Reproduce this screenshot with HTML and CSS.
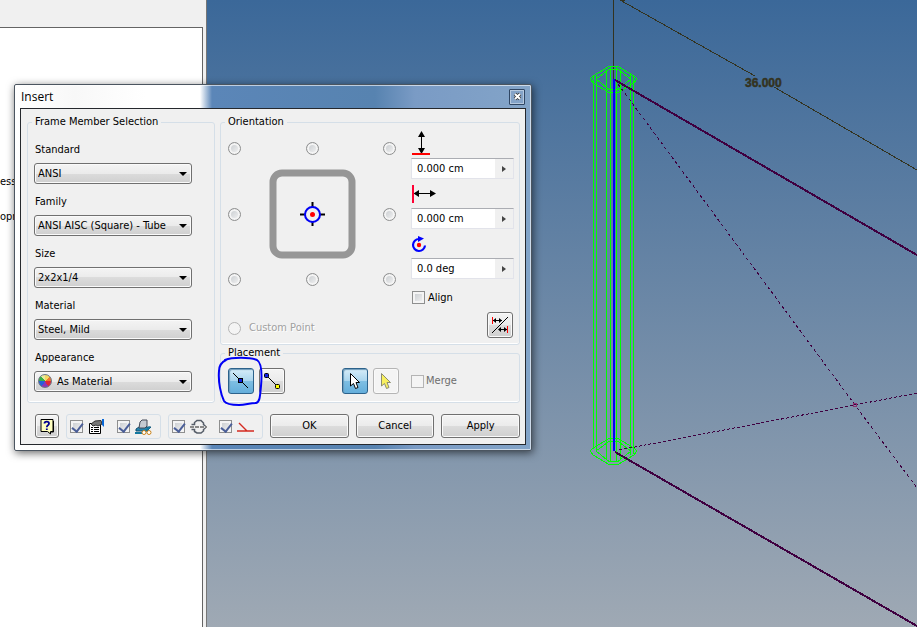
FILE: index.html
```html
<!DOCTYPE html>
<html lang="en">
<head>
    <meta charset="utf-8">
    <title>Insert Frame</title>
    <link rel="stylesheet" href="styles.css">
</head>
<body>
    <div class="app">
        <aside class="browser">
            <div class="browser-tree">
                <p>ess</p>
                <p>opr</p>
            </div>
        </aside>

        <main class="viewport">
            <svg class="model" viewBox="207 0 710 627" preserveAspectRatio="xMinYMin slice" shape-rendering="crispEdges" fill="none">
                <!-- dimension -->
                <g stroke="#33331f">
                    <path d="M613.5 0V79M620 0L755 76M774 87L917 170"/>
                    <path d="M620 0h5" stroke-width="2"/>
                </g>
                <text class="dimension" x="745" y="87">36.000</text>
                <!-- tube -->
                <g stroke="#00ff00">
                    <path d="M593.5 76V449M596.5 75V450M606.5 70V459M610.5 67V461M616.5 67V461M620.5 70V459M630.5 75V455M633.5 76V454"/>
                    <path id="profile" d="M590 79L593 76L609 66.500H618L634 76L637 79L634 83L618 92.500H609L593 83ZM596 79L609 69.500H618L631 79L618 89.500H609Z"/>
                    <use href="#profile" y="372"/>
                </g>
                <path d="M614 79V451" stroke="#0000ff" stroke-width="2"/>
                <!-- sketch lines -->
                <g stroke="#3f0040">
                    <path d="M615 80L917 255M615 452L917 626" stroke-width="2"/>
                    <path d="M618 84L855 405L917 488" stroke-dasharray="3 3"/>
                    <path d="M619 450L855 405L917 393" stroke-dasharray="3 2"/>
                </g>
                <rect x="853.500" y="403.500" width="3" height="3" stroke="#8c3070"/>
            </svg>
        </main>
    </div>

    <form class="dialog" onsubmit="return false">
        <header class="titlebar">
            <h1>Insert</h1>
            <button type="button" class="close" aria-label="Close">
                <svg width="9" height="9" viewBox="0 0 9 9"><path d="M2 2L7 7M7 2L2 7" stroke="#333" stroke-width="3.500"/><path d="M2 2L7 7M7 2L2 7" stroke="#fff" stroke-width="2"/></svg>
            </button>
        </header>

        <div class="client">
            <div class="panels">
                <fieldset class="member">
                    <legend>Frame Member Selection</legend>
                    <div class="field">
                        <label for="standard">Standard</label>
                        <div class="combo"><select id="standard"><option>ANSI</option></select></div>
                    </div>
                    <div class="field">
                        <label for="family">Family</label>
                        <div class="combo"><select id="family"><option>ANSI AISC (Square) - Tube</option></select></div>
                    </div>
                    <div class="field">
                        <label for="size">Size</label>
                        <div class="combo"><select id="size"><option>2x2x1/4</option></select></div>
                    </div>
                    <div class="field">
                        <label for="material">Material</label>
                        <div class="combo"><select id="material"><option>Steel, Mild</option></select></div>
                    </div>
                    <div class="field">
                        <label for="appearance">Appearance</label>
                        <div class="combo has-wheel"><span class="wheel"></span><select id="appearance"><option>As Material</option></select></div>
                    </div>
                </fieldset>

                <div class="side">
                    <fieldset class="orientation">
                        <legend>Orientation</legend>
                        <div class="orientation-body">
                            <div class="picker">
                                <input type="radio" name="point" aria-label="Top left">
                                <input type="radio" name="point" aria-label="Top center">
                                <input type="radio" name="point" aria-label="Top right">
                                <input type="radio" name="point" aria-label="Middle left">
                                <svg width="87" height="90" viewBox="0 0 87 90" fill="none">
                                    <rect x="4" y="4" width="79" height="82" rx="9" stroke="#969696" stroke-width="7"/>
                                    <path d="M43.500 33V38M43.500 52V57M31 45.500H37M50 45.500H56" stroke="#000" stroke-width="2"/>
                                    <circle cx="43.500" cy="45.500" r="7.500" stroke="#0000f5" stroke-width="2"/>
                                    <circle cx="43.500" cy="45.500" r="2.500" fill="#f00"/>
                                </svg>
                                <input type="radio" name="point" aria-label="Middle right">
                                <input type="radio" name="point" aria-label="Bottom left">
                                <input type="radio" name="point" aria-label="Bottom center">
                                <input type="radio" name="point" aria-label="Bottom right">
                            </div>

                            <div class="offsets">
                                <div class="offset">
                                    <label for="vertical" aria-label="Vertical offset">
                                        <svg width="26" height="26" viewBox="0 0 26 26"><path d="M10.500 4V20" stroke="#000"/><path d="M10.500 0L14 6H7ZM10.500 23L14 17H7Z"/><path d="M1 23H19" stroke="#f00" stroke-width="2"/></svg>
                                    </label>
                                    <div class="spin"><input id="vertical" type="text" value="0.000 cm"><button type="button" aria-label="More"></button></div>
                                </div>
                                <div class="offset">
                                    <label for="horizontal" aria-label="Horizontal offset">
                                        <svg width="26" height="26" viewBox="0 0 26 26"><path d="M5 12.500H22" stroke="#000"/><path d="M2.500 12.500L8 9V16ZM25 12.500L19 9V16Z"/><path d="M2 4V22" stroke="#ff0033" stroke-width="2"/></svg>
                                    </label>
                                    <div class="spin"><input id="horizontal" type="text" value="0.000 cm"><button type="button" aria-label="More"></button></div>
                                </div>
                                <div class="offset">
                                    <label for="angle" aria-label="Rotation">
                                        <svg width="26" height="26" viewBox="0 0 26 26" fill="none"><path d="M8 8A6 6 0 1 0 14 14.500" stroke="#00f" stroke-width="2.200"/><path d="M7 5V11L13 7.500Z" fill="#00f"/><circle cx="8" cy="14" r="2.200" fill="#f00"/></svg>
                                    </label>
                                    <div class="spin"><input id="angle" type="text" value="0.0 deg"><button type="button" aria-label="More"></button></div>
                                </div>
                                <label class="check"><input type="checkbox">Align</label>
                            </div>
                        </div>

                        <div class="custom">
                            <label class="disabled"><input type="radio" name="point" disabled>Custom Point</label>
                            <button type="button" class="tool" aria-label="Flip offsets">
                                <svg width="24" height="24" viewBox="0 0 24 24"><path d="M4 20L20 4" stroke="#000"/><path d="M5 7.500H14M12 16.500H19" stroke="#000"/><path d="M5 7.500L8 5V10ZM14 7.500L11 5V10ZM10 16.500L13 14V19ZM19 16.500L16 14V19Z"/><path d="M4.500 4V11M19.500 13V20" stroke="#f00"/></svg>
                            </button>
                        </div>
                    </fieldset>

                    <fieldset class="placement">
                        <legend>Placement</legend>
                        <div class="placement-body">
                            <div class="pair marked">
                                <button type="button" class="tool active" aria-label="Insert on edge">
                                    <svg width="24" height="24" viewBox="0 0 24 24"><path d="M4 4L19 19" stroke="#000"/><rect x="9.500" y="9.500" width="4" height="4" fill="#1020e0" stroke="#000"/></svg>
                                </button>
                                <button type="button" class="tool" aria-label="Insert between points">
                                    <svg width="24" height="24" viewBox="0 0 24 24"><path d="M6 6L18 18" stroke="#000"/><rect x="4.500" y="4.500" width="4" height="4" rx="1" fill="#1020e0" stroke="#000"/><rect x="15.500" y="15.500" width="4" height="4" rx="1" fill="#ff0" stroke="#000"/></svg>
                                </button>
                                <svg class="mark" width="48" height="54" viewBox="0 0 48 54" fill="none"><path d="M8 5C15 2 33 2 40 5C45 8 45 20 44 31C43 41 43 47 39 48C32 48 29 50 22 50C15 50 9 49 7 46C4 40 1 27 2 16C2 11 5 7 9 5" stroke="#0000f5" stroke-width="2" stroke-linecap="round"/></svg>
                            </div>
                            <div class="pair">
                                <button type="button" class="tool active" aria-label="Select">
                                    <svg width="24" height="24" viewBox="0 0 24 24"><path d="M7.500 4.500V17L10.500 14.500L12.500 19.500L15 18.500L13 13.500H16.500Z" fill="#fff" stroke="#000"/></svg>
                                </button>
                                <button type="button" class="tool" aria-label="Select members" disabled>
                                    <svg width="24" height="24" viewBox="0 0 24 24"><path d="M7.500 4.500V17L10.500 14.500L12.500 19.500L15 18.500L13 13.500H16.500Z" fill="#f8f060" stroke="#8c8c70"/></svg>
                                </button>
                            </div>
                            <label class="check merge"><input type="checkbox" disabled>Merge</label>
                        </div>
                    </fieldset>
                </div>
            </div>

            <footer class="actions">
                <button type="button" class="tool help" aria-label="Help">
                    <svg width="18" height="18" viewBox="0 0 18 18"><path d="M3 2.500H15V14.500H12.500V17L9.500 14.500H3Z" fill="#ffffc0" stroke="#000"/><path d="M15.500 4V15H13" stroke="#000" fill="none"/><path d="M6.500 6.500C6.500 4 11 4 11 6.500C11 8.500 8.800 8 8.800 10.200M8.800 11.500V13" stroke="#000090" stroke-width="1.800" fill="none"/></svg>
                </button>
                <div class="options">
                    <label><input type="checkbox" checked aria-label="Prompt for file name">
                        <svg width="17" height="16" viewBox="0 0 17 16"><path d="M1.500 4.500H12.500V14.500H1.500Z" fill="#fff" stroke="#000"/><path d="M3 8.500H5M6 8.500H11M3 10.500H5M6 10.500H11M3 12.500H5M6 12.500H11" stroke="#000"/><path d="M3 5L7 2L13 1.500L14 5L10 7L8 6L5 7Z" fill="#777" stroke="#333"/><path d="M14 0H16V8L14 6Z" fill="#0868d8"/></svg>
                    </label>
                    <label><input type="checkbox" checked aria-label="Group members">
                        <svg width="17" height="16" viewBox="0 0 17 16"><path d="M1 10L4 8H16L12 12H1Z" fill="#2583ab" stroke="#124e70"/><path d="M0 14H8L15 8" stroke="#1478a0" stroke-width="2" fill="none"/><path d="M5 3L7 1H12V7L10 9H4Z" fill="#c4cad2" stroke="#444b58"/><circle cx="9" cy="13.500" r="2" fill="#fff" stroke="#c98218"/><circle cx="14" cy="13.500" r="2" fill="#fff" stroke="#c98218"/></svg>
                    </label>
                </div>
                <div class="options">
                    <label><input type="checkbox" checked aria-label="Merge bends">
                        <svg width="17" height="16" viewBox="0 0 17 16" fill="none"><path d="M1.500 5.500H4.500V3.500L7 1.500H11L13.500 4V5.500L15.500 7M15.500 9L13.500 10.500V12L11 14H7L4.500 12.500V10.500H1.500" stroke="#555d68" stroke-width="1.500"/><path d="M0 8H17" stroke="#222" stroke-dasharray="4 1"/></svg>
                    </label>
                    <label><input type="checkbox" checked aria-label="End treatment">
                        <svg width="17" height="16" viewBox="0 0 17 16" fill="none"><path d="M0 12H17M2 4L10 12" stroke="#d42a20" stroke-width="1.400"/></svg>
                    </label>
                </div>
                <button type="submit" class="push">OK</button>
                <button type="button" class="push">Cancel</button>
                <button type="button" class="push">Apply</button>
            </footer>
        </div>
    </form>
</body>
</html>
```

FILE: styles.css
```css
* {
    box-sizing: border-box;
}
body {
    margin: 0;
    font-family: "DejaVu Sans Condensed", "DejaVu Sans", Tahoma, sans-serif;
    font-size: 11px;
    line-height: 14px;
    color: #000;
}
button, input, select {
    font: inherit;
    color: inherit;
    margin: 0;
    padding: 0;
}
svg {
    display: block;
}

/* Application window behind the dialog */
.app {
    display: flex;
    height: 100vh;
    overflow: hidden;
}
.browser {
    flex: 0 0 207px;
    display: flex;
    padding: 27px 3px 0 0;
    background-color: #f0f0f0;
    border-right: 1px solid #767676;
}
.browser-tree {
    flex: 1;
    padding-top: 147px;
    background-color: #fff;
    border-top: 1px solid #646464;
    border-right: 1px solid #646464;
}
.browser-tree p {
    margin: 0 0 21px;
}
.viewport {
    flex: 1;
    min-width: 0;
    background: linear-gradient(#3b6899, #9fa9b4);
}
.model {
    width: 100%;
    height: 100%;
}
.dimension {
    fill: #33331f;
    stroke: #33331f;
    stroke-width: 0.5px;
    font-family: "Liberation Sans", Arial, sans-serif;
    font-size: 12px;
    font-weight: bold;
}

/* Dialog frame */
.dialog {
    position: absolute;
    top: 84px;
    left: 14px;
    width: 518px;
    padding: 0 5px 5px;
    border: 1px solid #4b5560;
    border-radius: 2px;
    background: linear-gradient(90deg, #fff, #f8f8f8 60px, #fff 130px, #fff 185px, #5b86b8 197px, #5783b0 360px, #7a9bc5 400px, #83a4c8);
    box-shadow: inset 0 0 0 1px rgba(255, 255, 255, 0.6), 1px 2px 8px rgba(0, 0, 0, 0.6);
}
.titlebar {
    display: flex;
    justify-content: space-between;
    align-items: center;
    height: 23px;
    padding: 0 1px;
}
.titlebar h1 {
    margin: 0;
    font-family: "Open Sans", "Segoe UI", sans-serif;
    font-size: 12px;
    font-weight: normal;
}
.close {
    display: flex;
    justify-content: center;
    align-items: center;
    width: 16px;
    height: 16px;
    border: 1px solid #2f4664;
    border-radius: 1px;
    background-color: #84a3c8;
    box-shadow: inset 0 0 0 1px rgba(255, 255, 255, 0.4);
}
.client {
    padding: 6px 5px 5px 6px;
    border: 1px solid #25282d;
    background-color: #f0f0f0;
}
.panels {
    display: grid;
    grid-template-columns: 188px 1fr;
    column-gap: 5px;
}

/* Group boxes */
fieldset {
    margin: 0;
    padding: 0 4px;
    min-width: 0;
    border: 1px solid #d5dfe8;
    border-radius: 3px;
    box-shadow: inset 0 -1px #fff;
}
legend {
    padding: 0 3px;
}
.side {
    display: flex;
    flex-direction: column;
    gap: 1px;
}
.member {
    padding-bottom: 10px;
}
.field {
    padding: 0 18px 0 2px;
    margin-top: 11px;
}
.field:first-of-type {
    margin-top: 14px;
}
.field label {
    display: block;
    margin-bottom: 6px;
    padding-left: 1px;
}
.combo {
    position: relative;
}
.combo select {
    display: block;
    width: 100%;
    height: 21px;
    padding: 0 20px 0 3px;
    appearance: none;
    border: 1px solid #707070;
    border-radius: 3px;
    background: linear-gradient(#f4f4f4, #ebebeb 50%, #dcdcdc 50%, #cfcfcf);
    box-shadow: inset 0 0 0 1px #fafafa;
}
.combo::after {
    content: "";
    position: absolute;
    top: 9px;
    right: 5px;
    border: 4px solid transparent;
    border-top-color: #000;
    border-bottom: 0;
}
.has-wheel select {
    padding-left: 22px;
}
.wheel {
    position: absolute;
    top: 3px;
    left: 4px;
    width: 14px;
    height: 14px;
    border: 1px solid #6a7480;
    border-radius: 50%;
    background: conic-gradient(#f4d860 0 45deg, #f07830 45deg 90deg, #e02838 90deg 150deg, #8838b8 150deg 210deg, #2860d8 210deg 270deg, #38b048 270deg 320deg, #e8e8a0 320deg);
}

/* Tick boxes and radios */
input[type="radio"],
input[type="checkbox"] {
    flex: none;
    width: 13px;
    height: 13px;
    appearance: none;
    border: 1px solid #8e8f8f;
    background: linear-gradient(135deg, #c4c8cc, #f6f6f6);
    box-shadow: inset 0 0 0 2px #f4f4f4;
}
input[type="radio"] {
    border-radius: 50%;
}
input[type="checkbox"]:checked {
    position: relative;
}
input[type="checkbox"]:checked::after {
    content: "";
    position: absolute;
    top: 0;
    left: 3px;
    width: 5px;
    height: 9px;
    border: solid #4b5f98;
    border-width: 0 2px 2px 0;
    transform: rotate(38deg);
}
input:disabled {
    border-color: #b4b4b4;
    background: #f4f4f4;
}

/* Orientation */
.orientation-body {
    display: flex;
    justify-content: space-between;
    padding-right: 1px;
}
.picker {
    display: grid;
    grid-template-columns: 13px 1fr 13px;
    grid-template-rows: 13px 1fr 13px;
    place-items: center;
    width: 168px;
    height: 144px;
    margin: 13px 0 0 3px;
}
.offsets {
    width: 103px;
}
.offset label {
    display: flex;
    align-items: center;
    height: 29px;
}
.spin {
    display: flex;
    height: 21px;
    border: 1px solid #e2e3ea;
    border-top-color: #abadb3;
    background-color: #fff;
}
.spin input {
    flex: 1;
    min-width: 0;
    padding-left: 5px;
    border: 0;
    background: none;
}
.spin button {
    display: flex;
    justify-content: center;
    align-items: center;
    width: 18px;
    border: 0;
    background-color: #f0f0f0;
}
.spin button::after {
    content: "";
    border: 3px solid transparent;
    border-left: 4px solid #444;
    border-right: 0;
}
.check {
    display: flex;
    align-items: center;
    gap: 3px;
    height: 13px;
}
.offsets .check {
    margin: 12px 0 0 1px;
}
.custom {
    display: flex;
    justify-content: space-between;
    align-items: center;
    margin: 8px 2px 6px 3px;
}
.custom label {
    display: flex;
    align-items: center;
    gap: 8px;
    margin-top: 6px;
}
.disabled {
    color: #a0a0a0;
    text-shadow: 1px 1px #fff;
}

/* Buttons */
.tool,
.push {
    border: 1px solid #707070;
    border-radius: 3px;
    background: linear-gradient(#f4f4f4, #ebebeb 50%, #dcdcdc 50%, #cfcfcf);
    box-shadow: inset 0 0 0 1px #fafafa;
}
.tool {
    flex: none;
    width: 26px;
    height: 26px;
}
.tool.active {
    border-color: #2c628b;
    background: linear-gradient(#d6ecf8, #a9d5ee 50%, #7fbfe3 50%, #64aedb);
    box-shadow: inset 1px 1px 1px #6c9ab8;
}
.tool:disabled {
    border-color: #b5b5b5;
    background: #f4f4f4;
}
.placement-body {
    display: flex;
    align-items: center;
    padding: 8px 3px;
}
.pair {
    display: flex;
    gap: 5px;
}
.marked {
    position: relative;
    margin-right: 57px;
}
.mark {
    position: absolute;
    top: -13px;
    left: -11px;
    pointer-events: none;
}
.merge {
    margin-left: 12px;
    gap: 2px;
    color: #6d6d6d;
}

/* Bottom row */
.actions {
    display: flex;
    gap: 7px;
    margin-top: 11px;
    padding-left: 8px;
}
.help {
    width: 24px;
    height: 24px;
    padding: 0 2px;
}
.options {
    flex: none;
    display: flex;
    align-items: center;
    gap: 12px;
    width: 95px;
    height: 25px;
    padding: 0 3px;
    border: 1px solid #d5dfe8;
    border-radius: 3px;
}
.options label {
    display: flex;
    align-items: center;
    gap: 5px;
}
.push {
    flex: 1;
    height: 24px;
}
```
